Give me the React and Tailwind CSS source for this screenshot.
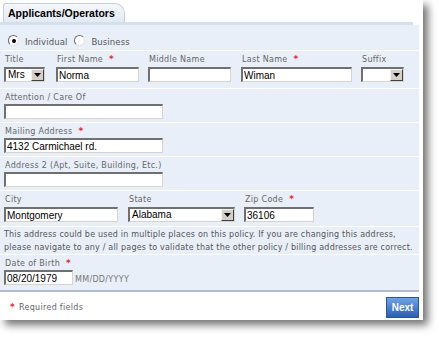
import React from 'react';

const labelCls = "font-['DejaVu_Sans',sans-serif] text-[8px] leading-[11px] tracking-[0.3px] text-[#666] whitespace-nowrap";
const boxCls = "h-[15px] bg-white border-t-2 border-l-2 border-r border-b border-t-[#707070] border-l-[#707070] border-r-[#d8d4cc] border-b-[#d8d4cc] font-['Liberation_Sans',Arial,sans-serif] text-[10px] text-black";

function Req() {
  return <span className="ml-[6px] text-[#e8282e] font-bold text-[9px] leading-[11px]">*</span>;
}

function Label({ children, req }) {
  return (
    <div className={`${labelCls} pl-[1px]`}>
      {children}
      {req && <Req />}
    </div>
  );
}

function Field({ w, value = '' }) {
  return <input readOnly value={value} className={`${boxCls} ${w} px-[1px] outline-none block`} />;
}

function Select({ w, value = '' }) {
  return (
    <div className={`${boxCls} ${w} flex`}>
      <span className="flex-1 pl-[2px] leading-[12px] whitespace-nowrap overflow-hidden">{value}</span>
      <span className="w-[13px] h-full bg-[#d4d0c8] border border-t-[#f4f2ee] border-l-[#f4f2ee] border-r-[#404040] border-b-[#404040] flex items-center justify-center">
        <svg width="7" height="4" viewBox="0 0 7 4">
          <path d="M0 0h7L3.5 4z" fill="#000" />
        </svg>
      </span>
    </div>
  );
}

function Radio({ checked }) {
  return (
    <span className="w-[11px] h-[11px] rounded-full bg-white border border-t-[#6a6a6a] border-l-[#6a6a6a] border-r-[#e4e4e4] border-b-[#e4e4e4] flex items-center justify-center">
      {checked && <span className="w-[4px] h-[4px] rounded-full bg-black" />}
    </span>
  );
}

export default function App() {
  return (
    <div className="w-[439px] h-[338px] bg-white overflow-hidden">
      <div className="w-[423px] h-[320px] bg-white shadow-[5px_5px_8px_rgba(0,0,0,0.55)] flex flex-col">
        {/* tab */}
        <div className="h-[22px] pl-[3px] pt-[3px] flex">
          <div className="w-[122px] h-[19px] rounded-tl-[3px] rounded-tr-[10px] border border-b-0 border-[#c3d0e1] bg-linear-to-b from-[#f4f7fb] to-[#e3eaf4] pl-[4px] pt-[2px] font-['Liberation_Sans',Arial,sans-serif] font-bold text-[10.5px] leading-[14px] text-black whitespace-nowrap">
            Applicants/Operators
          </div>
        </div>
        <div className="h-[3px] w-[413px] bg-[#d4dfec]" />

        <div className="w-[419px] bg-[#e9eff8]">
          {/* type */}
          <div className="h-[26px] flex items-start pl-[8px] pt-[10px] border-b border-white">
            <Radio checked />
            <span className="font-['DejaVu_Sans',sans-serif] text-[8.5px] leading-[11px] tracking-[0.1px] text-[#555] whitespace-nowrap ml-[6px] mt-[2px]">Individual</span>
            <span className="ml-[7px]"><Radio /></span>
            <span className="font-['DejaVu_Sans',sans-serif] text-[8.5px] leading-[11px] tracking-[0.1px] text-[#555] whitespace-nowrap ml-[6px] mt-[2px]">Business</span>
          </div>

          {/* name */}
          <div className="flex pl-[4px] pt-[3px] pb-[6px] border-b border-white">
            <div className="w-[41px] flex flex-col gap-[2px]">
              <Label>Title</Label>
              <Select w="w-[41px]" value="Mrs" />
            </div>
            <div className="ml-[11px] flex flex-col gap-[2px]">
              <Label req>First Name</Label>
              <Field w="w-[83px]" value="Norma" />
            </div>
            <div className="ml-[9px] flex flex-col gap-[2px]">
              <Label>Middle Name</Label>
              <Field w="w-[83px]" />
            </div>
            <div className="ml-[10px] flex flex-col gap-[2px]">
              <Label req>Last Name</Label>
              <Field w="w-[111px]" value="Wiman" />
            </div>
            <div className="ml-[9px] flex flex-col gap-[2px]">
              <Label>Suffix</Label>
              <Select w="w-[43px]" />
            </div>
          </div>

          <div className="pl-[4px] pt-[3px] pb-[3px] flex flex-col gap-[1px] border-b border-white">
            <Label>Attention / Care Of</Label>
            <Field w="w-[159px]" />
          </div>

          <div className="pl-[4px] pt-[3px] pb-[3px] flex flex-col gap-[1px] border-b border-white">
            <Label req>Mailing Address</Label>
            <Field w="w-[159px]" value="4132 Carmichael rd." />
          </div>

          <div className="pl-[4px] pt-[3px] pb-[3px] flex flex-col gap-[1px] border-b border-white">
            <Label>Address 2 (Apt, Suite, Building, Etc.)</Label>
            <Field w="w-[159px]" />
          </div>

          <div className="flex pl-[4px] pt-[3px] pb-[4px] border-b border-white">
            <div className="flex flex-col gap-[2px]">
              <Label>City</Label>
              <Field w="w-[114px]" value="Montgomery" />
            </div>
            <div className="ml-[10px] flex flex-col gap-[2px]">
              <Label>State</Label>
              <Select w="w-[107px]" value="Alabama" />
            </div>
            <div className="ml-[9px] flex flex-col gap-[2px]">
              <Label req>Zip Code</Label>
              <Field w="w-[70px]" value="36106" />
            </div>
          </div>

          <div className="font-['DejaVu_Sans',sans-serif] text-[8px] tracking-[0.2px] whitespace-nowrap text-[#555] leading-[13px] pl-[4px] pt-[1px] h-[28px] border-b border-white">
            This address could be used in multiple places on this policy. If you are changing this address,
            <br />
            please navigate to any / all pages to validate that the other policy / billing addresses are correct.
          </div>

          <div className="pl-[4px] pt-[3px] pb-[5px] flex flex-col gap-[1px]">
            <Label req>Date of Birth</Label>
            <div className="flex items-end">
              <Field w="w-[69px]" value="08/20/1979" />
              <span className={`${labelCls} ml-[2px] text-[#777]`}>MM/DD/YYYY</span>
            </div>
          </div>
        </div>
        <div className="h-[2px] w-[419px] bg-[#aebccd]" />

        {/* footer */}
        <div className="flex items-center justify-between pl-[10px] pr-[4px] mt-[5px] h-[21px]">
          <div className={`${labelCls} text-[#555] flex items-center`}>
            <span className="text-[#e8282e] font-bold text-[9px] mr-[4px]">*</span>
            Required fields
          </div>
          <button className="h-[21px] w-[33px] border border-[#2b569b] bg-linear-to-b from-[#6ea3e8] to-[#2c5fb4] text-white font-bold text-[10px] font-['Liberation_Sans',Arial,sans-serif]">
            Next
          </button>
        </div>
      </div>
    </div>
  );
}
